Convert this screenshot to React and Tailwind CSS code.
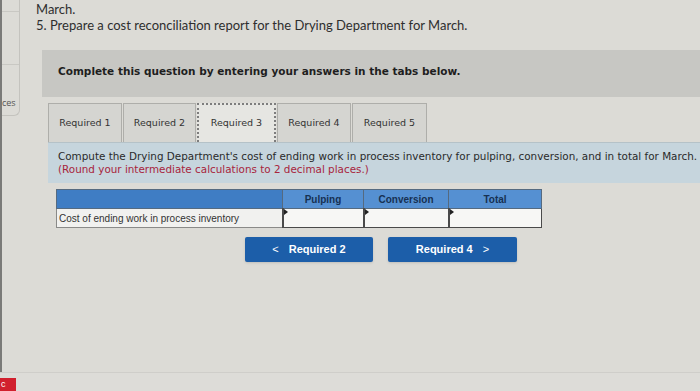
export default function App() {
  const tabs = [
    { label: "Required 1", w: "w-[74px]" },
    { label: "Required 2", w: "w-[73px]" },
    { label: "Required 3", w: "w-[79px]", active: true },
    { label: "Required 4", w: "w-[74px]" },
    { label: "Required 5", w: "w-[75px]" },
  ]

  return (
    <div className="w-[700px] h-[391px] bg-[#dcdbd6] flex flex-col overflow-hidden font-['Lato',sans-serif]">
      <div className="flex flex-1">
        {/* left sidebar sliver */}
        <div className="w-[22px] border-l-2 border-[#7a7a78]">
          <div className="h-[116px] w-[18px] border-r border-b border-[#c4c3be] rounded-br-md flex flex-col">
            <div className="h-[12px] border-b border-[#c9c8c3]"></div>
            <div className="h-[53px] border-b border-[#c9c8c3]"></div>
            <div className="flex-1 flex items-end pb-[8px]">
              <span className="text-[9px] text-[#555] leading-none font-['Open_Sans',sans-serif]">ces</span>
            </div>
          </div>
        </div>

        {/* main */}
        <div className="flex-1 flex flex-col">
          <div className="pl-[14px] pt-[1px] text-[13px] leading-[16px] text-[#2e2e2e]">
            <p>March.</p>
            <p>5. Prepare a cost reconciliation report for the Drying Department for March.</p>
          </div>

          <div className="ml-[20px] mt-[17px] h-[47px] bg-[#c7c7c3] pl-[16px] pt-[15px]">
            <p className="font-['DejaVu_Sans',sans-serif] font-bold text-[10.5px] leading-[12px] text-[#1e1e1e]">
              Complete this question by entering your answers in the tabs below.
            </p>
          </div>

          <div className="ml-[26px] mt-[6px] flex gap-[1px] h-[39px] font-['DejaVu_Sans',sans-serif] text-[9.5px] text-[#333]">
            {tabs.map((t) => (
              <div
                key={t.label}
                className={
                  t.active
                    ? `${t.w} h-full flex items-center justify-center bg-[#e6e6e2] border-2 border-dotted border-[#7d7d7d] border-b-0`
                    : `${t.w} h-full flex items-center justify-center bg-[#d5d5d1] border border-[#aeaeaa] border-b-0`
                }
              >
                {t.label}
              </div>
            ))}
          </div>

          <div className="ml-[26px] h-[41px] bg-[#c6d5dd] border-t border-[#b5c2c8] pl-[10px] pt-[7px] font-['DejaVu_Sans',sans-serif] text-[10.4px] leading-[13px] whitespace-nowrap overflow-hidden">
            <p className="text-[#2a2a2a]">
              Compute the Drying Department's cost of ending work in process inventory for pulping, conversion, and in total for March.
            </p>
            <p className="text-[#a8243c]">(Round your intermediate calculations to 2 decimal places.)</p>
          </div>

          <table className="ml-[34px] mt-[6px] w-[485px] table-fixed border-collapse font-['Liberation_Sans',sans-serif] text-[10px]">
            <thead>
              <tr className="h-[19px]">
                <th className="w-[226px] bg-[#3f7dc4] border border-[#556a80]"></th>
                <th className="w-[81px] bg-[#5590d2] border border-[#556a80] text-[#173152] font-bold">Pulping</th>
                <th className="w-[85px] bg-[#5590d2] border border-[#556a80] text-[#173152] font-bold">Conversion</th>
                <th className="w-[93px] bg-[#5590d2] border border-[#556a80] text-[#173152] font-bold">Total</th>
              </tr>
            </thead>
            <tbody>
              <tr className="h-[19px]">
                <td className="bg-[#f1f1ef] border border-[#8a8a88] pl-[2px] text-[#333] text-left whitespace-nowrap">
                  Cost of ending work in process inventory
                </td>
                {[0, 1, 2].map((i) => (
                  <td key={i} className="relative bg-[#f7f7f5] border border-[#4a4a4a] border-l-2">
                    <span className="absolute left-0 top-0 w-0 h-0 border-t-[3px] border-b-[3px] border-l-[4px] border-t-transparent border-b-transparent border-l-[#222]"></span>
                  </td>
                ))}
              </tr>
            </tbody>
          </table>

          <div className="ml-[223px] mt-[9px] flex gap-[15px] font-['Liberation_Sans',sans-serif] font-bold text-[11px] text-white">
            <div className="w-[128px] h-[25px] bg-[#1c5ea9] rounded-[2px] flex items-center justify-center gap-[10px] shadow-sm">
              <span className="font-normal text-[11px]">&lt;</span>
              <span>Required 2</span>
            </div>
            <div className="w-[129px] h-[25px] bg-[#1c5ea9] rounded-[2px] flex items-center justify-center gap-[10px] shadow-sm">
              <span>Required 4</span>
              <span className="font-normal text-[11px]">&gt;</span>
            </div>
          </div>
        </div>
      </div>

      {/* bottom strip */}
      <div className="h-[19px] border-t border-[#cfceca] bg-[#dddcd8] flex items-end">
        <div className="w-[16px] h-[13px] bg-[#d1202e] flex items-center pl-[1px]">
          <span className="text-[9px] leading-none text-white font-['Liberation_Sans',sans-serif]">c</span>
        </div>
      </div>
    </div>
  )
}
